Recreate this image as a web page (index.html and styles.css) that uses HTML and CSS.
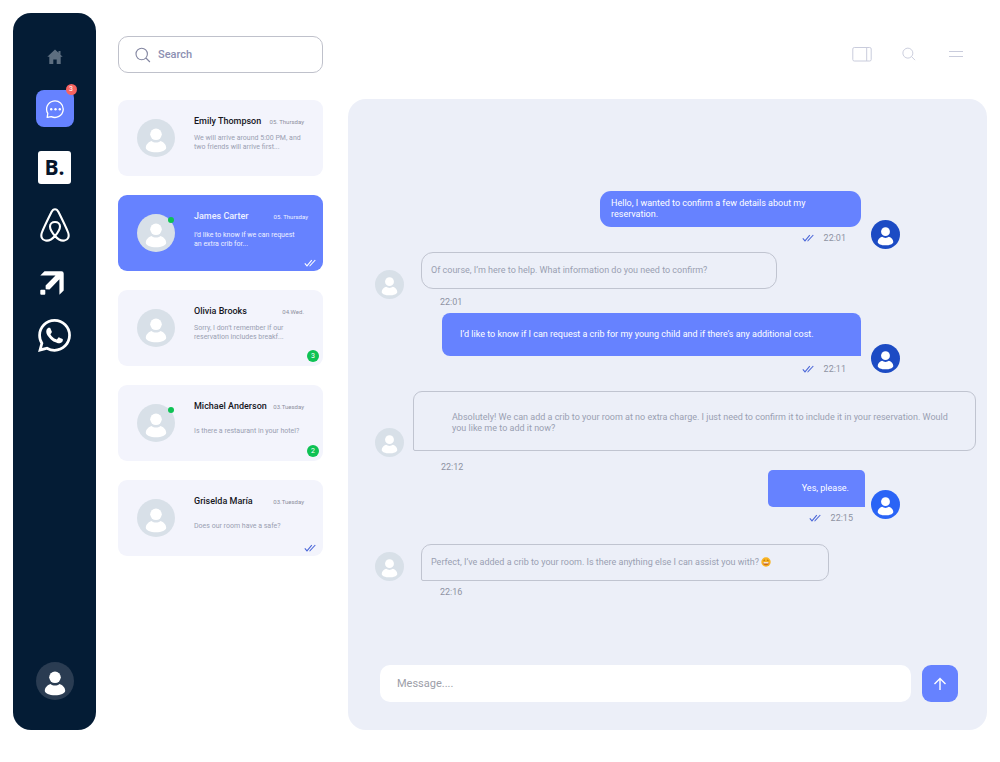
FILE: index.html
```html
<!DOCTYPE html>
<html lang="en">
<head>
  <meta charset="UTF-8" />
  <meta name="viewport" content="width=device-width, initial-scale=1.0"/>
  <title>Messages</title>
  <link rel="stylesheet" href="styles.css">
</head>
<body>

  <!-- Shared icons -->
  <svg class="sprite" aria-hidden="true">
    <symbol id="person" viewBox="0 0 38 38">
      <circle cx="19" cy="15.3" r="5.800"/>
      <path d="M14.500 22c2.600 2 6.400 2 9 0 3.200 1 5.700 3.900 5.700 6.700 0 2.500-4.600 4.500-10.200 4.500s-10.200-2-10.200-4.500c0-2.800 2.500-5.700 5.700-6.700z"/>
    </symbol>
    <symbol id="ticks" viewBox="0 0 12 8">
      <path d="M.8 4.300l2.200 2.500L7.800 1.200M5.600 6.500l.3.300L11.300 1" fill="none" stroke="currentColor" stroke-width="1.100"/>
    </symbol>
    <symbol id="glass" viewBox="0 0 16 16">
      <path d="M12.400 7a5.700 5.700 0 1 1-11.400 0 5.700 5.700 0 0 1 11.400 0zM10.900 11l4 4" fill="none" stroke="currentColor" stroke-width="1.100"/>
    </symbol>
  </svg>

  <!-- Sidebar -->
  <nav class="sidebar">
    <a href="#" class="home" aria-label="Home">
      <svg width="18" height="18" viewBox="0 0 18 18"><path d="M9 1.500L1.300 8.700h2V16h4v-4.500h3.400V16h4V8.700h2l-2.200-2V3h-2v1.800z" fill="#5d6e80"/></svg>
    </a>
    <a href="#" class="chats" aria-label="Messages">
      <svg width="20" height="20" viewBox="0 0 20 20">
        <path d="M2.200 18.400l.6-4A8.300 8.300 0 1 1 6.300 17.600z" fill="none" stroke="#fff" stroke-width="1.300" stroke-linejoin="round"/>
        <circle cx="6.200" cy="10.200" r="1.200" fill="#fff"/><circle cx="10.500" cy="10.200" r="1.200" fill="#fff"/><circle cx="14.800" cy="10.200" r="1.200" fill="#fff"/>
      </svg>
      <span class="alert">3</span>
    </a>
    <a href="#" class="booking" aria-label="Booking">B.</a>
    <a href="#" aria-label="Airbnb">
      <svg width="30" height="34" viewBox="0 0 30 34"><path d="M15 28C11.500 32 8 33 5.500 32.500 2 32 .4 28.500 1.900 24.500 4 19 9 9 11.500 4c1-2 2-2.800 3.500-2.800s2.500.8 3.500 2.800c2.500 5 7.500 15 9.600 20.500 1.500 4-.1 7.500-3.600 8-2.500.5-6-.5-9.500-4.500-3-3.500-5-7-5-9.500 0-2.800 2.200-4.500 5-4.500s5 1.700 5 4.500c0 2.500-2 6-5 9.500z" fill="none" stroke="#fff" stroke-width="2.100"/></svg>
    </a>
    <a href="#" aria-label="Expedia">
      <svg width="29" height="29" viewBox="0 -5 29 29"><path d="M4.500.3H21.500Q23.700.3 23.700 2.500V19.500L19.400 23.800V8.300L9.500 18.400 5.700 18.200 5.600 14.500 15.500 4.600H.3zM1.200 18.700h3.200q.9 0 .9.900v3.200q0 .9-.9.900H1.200q-.9 0-.9-.9v-3.200q0-.9.900-.9z" fill="#fff"/></svg>
    </a>
    <a href="#" aria-label="WhatsApp">
      <svg width="33" height="33" viewBox="0 0 24 24"><path fill="#fff" d="M17.472 14.382c-.297-.149-1.758-.867-2.030-.967-.273-.099-.471-.148-.67.15-.197.297-.767.966-.94 1.164-.173.199-.347.223-.644.075-.297-.15-1.255-.463-2.390-1.475-.883-.788-1.480-1.761-1.653-2.059-.173-.297-.018-.458.13-.606.134-.133.298-.347.446-.52.149-.174.198-.298.298-.497.099-.198.05-.371-.025-.52-.075-.149-.669-1.612-.916-2.207-.242-.579-.487-.5-.669-.51-.173-.008-.371-.01-.57-.01-.198 0-.52.074-.792.372-.272.297-1.040 1.016-1.040 2.479 0 1.462 1.065 2.875 1.213 3.074.149.198 2.096 3.200 5.077 4.487.709.306 1.262.489 1.694.625.712.227 1.360.195 1.871.118.571-.085 1.758-.719 2.006-1.413.248-.694.248-1.289.173-1.413-.074-.124-.272-.198-.57-.347m-5.421 7.403h-.004a9.870 9.870 0 01-5.031-1.378l-.361-.214-3.741.982.998-3.648-.235-.374a9.860 9.860 0 01-1.510-5.260c.001-5.450 4.436-9.884 9.888-9.884 2.640 0 5.122 1.030 6.988 2.898a9.825 9.825 0 012.893 6.994c-.003 5.450-4.437 9.884-9.885 9.884m8.413-18.297A11.815 11.815 0 0012.050 0C5.495 0 .16 5.335.157 11.892c0 2.096.547 4.142 1.588 5.945L.057 24l6.305-1.654a11.882 11.882 0 005.683 1.448h.005c6.554 0 11.890-5.335 11.893-11.893a11.821 11.821 0 00-3.480-8.413Z"/></svg>
    </a>
    <a href="#" class="avatar me" aria-label="My profile"><svg><use href="#person"/></svg></a>
  </nav>

  <!-- Conversation list -->
  <aside class="inbox">
    <label class="search">
      <svg><use href="#glass"/></svg>
      <input type="search" placeholder="Search" aria-label="Search" />
    </label>

    <a href="#" class="card">
      <span class="avatar"><svg><use href="#person"/></svg></span>
      <div class="info">
        <div class="top"><h2>Emily Thompson</h2><time>05. Thursday</time></div>
        <p>We will arrive around 5:00 PM, and<br>two friends will arrive first...</p>
      </div>
    </a>

    <a href="#" class="card active">
      <span class="avatar"><svg><use href="#person"/></svg><i class="online"></i></span>
      <div class="info">
        <div class="top"><h2>James Carter</h2><time>05. Thursday</time></div>
        <p>I’d like to know if we can request<br>an extra crib for...</p>
      </div>
      <svg class="ticks"><use href="#ticks"/></svg>
    </a>

    <a href="#" class="card">
      <span class="avatar"><svg><use href="#person"/></svg></span>
      <div class="info">
        <div class="top"><h2>Olivia Brooks</h2><time>04.Wed.</time></div>
        <p>Sorry, I don’t remember if our<br>reservation includes breakf...</p>
      </div>
      <span class="unread">3</span>
    </a>

    <a href="#" class="card">
      <span class="avatar"><svg><use href="#person"/></svg><i class="online"></i></span>
      <div class="info">
        <div class="top"><h2>Michael Anderson</h2><time>03.Tuesday</time></div>
        <p class="single">Is there a restaurant in your hotel?</p>
      </div>
      <span class="unread">2</span>
    </a>

    <a href="#" class="card">
      <span class="avatar"><svg><use href="#person"/></svg></span>
      <div class="info">
        <div class="top"><h2>Griselda María</h2><time>03.Tuesday</time></div>
        <p class="single">Does our room have a safe?</p>
      </div>
      <svg class="ticks"><use href="#ticks"/></svg>
    </a>
  </aside>

  <!-- Chat -->
  <main>
    <header>
      <button aria-label="Toggle panel">
        <svg width="20" height="20" viewBox="0 0 20 20" fill="none" stroke="currentColor"><rect x=".8" y="3.500" width="18.400" height="13.500" rx="1.500"/><path d="M14.700 3.500V17"/></svg>
      </button>
      <button aria-label="Search chat"><svg width="14" height="14"><use href="#glass"/></svg></button>
      <button aria-label="Menu">
        <svg width="20" height="20" viewBox="0 0 20 20" fill="none" stroke="currentColor"><path d="M3 7.500h14M3 12.500h14"/></svg>
      </button>
    </header>

    <section class="chat">
      <article class="message sent first">
        <div class="content">
          <p class="bubble">Hello, I wanted to confirm a few details about my reservation.</p>
          <div class="meta"><svg class="ticks"><use href="#ticks"/></svg><time>22:01</time></div>
        </div>
        <span class="avatar"><svg><use href="#person"/></svg></span>
      </article>

      <article class="message help">
        <span class="avatar"><svg><use href="#person"/></svg></span>
        <div class="content">
          <p class="bubble">Of course, I’m here to help. What information do you need to confirm?</p>
          <div class="meta"><time>22:01</time></div>
        </div>
      </article>

      <article class="message sent request">
        <div class="content">
          <p class="bubble">I’d like to know if I can request a crib for my young child and if there’s any additional cost.</p>
          <div class="meta"><svg class="ticks"><use href="#ticks"/></svg><time>22:11</time></div>
        </div>
        <span class="avatar"><svg><use href="#person"/></svg></span>
      </article>

      <article class="message answer">
        <span class="avatar"><svg><use href="#person"/></svg></span>
        <div class="content">
          <p class="bubble">Absolutely! We can add a crib to your room at no extra charge. I just need to confirm it to include it in your reservation. Would<br>you like me to add it now?</p>
          <div class="meta"><time>22:12</time></div>
        </div>
      </article>

      <article class="message sent yes">
        <div class="content">
          <p class="bubble">Yes, please.</p>
          <div class="meta"><svg class="ticks"><use href="#ticks"/></svg><time>22:15</time></div>
        </div>
        <span class="avatar"><svg><use href="#person"/></svg></span>
      </article>

      <article class="message done">
        <span class="avatar"><svg><use href="#person"/></svg></span>
        <div class="content">
          <p class="bubble">Perfect, I’ve added a crib to your room. Is there anything else I can assist you with?
            <svg class="smile" viewBox="0 0 10 10"><circle cx="5" cy="5" r="4.700" fill="#f9b320"/><path d="M2 5.200h6a3 3 0 0 1-6 0z" fill="#c96a1c"/><path d="M2.500 5.200h5v1.200h-5z" fill="#fff"/><path d="M2.500 3.700q.8-1 1.600 0M5.900 3.700q.8-1 1.600 0" fill="none" stroke="#7a4415" stroke-width=".7"/></svg></p>
          <div class="meta"><time>22:16</time></div>
        </div>
      </article>

      <form class="composer">
        <input type="text" placeholder="Message...." aria-label="Message" />
        <button type="button" aria-label="Send">
          <svg width="14" height="14" viewBox="0 0 14 14"><path d="M7 13V1.500M1.500 7L7 1.500 12.500 7" fill="none" stroke="#fff" stroke-width="1.400"/></svg>
        </button>
      </form>
    </section>
  </main>

</body>
</html>
```

FILE: styles.css
```css
:root {
  --navy: #041c35;
  --blue: #6682ff;
  --panel: #eceff8;
  --card: #f3f4fc;
  --gray: #9a9fb2;
  --green: #0ec254;
}

* {
  margin: 0;
  padding: 0;
  box-sizing: border-box;
  font-family: Roboto, 'Liberation Sans', sans-serif;
}

body {
  display: flex;
  min-height: 100vh;
  padding: 13px 13px 32px;
  background: white;
}

a {
  color: inherit;
  text-decoration: none;
}

button {
  border: none;
  background: none;
  cursor: pointer;
}

svg {
  display: block;
}

.sprite {
  position: absolute;
  width: 0;
  height: 0;
}

.avatar {
  position: relative;
  flex: none;
  width: 38px;
  height: 38px;
  border-radius: 50%;
  background: #d8e0e8;
}

.avatar svg {
  width: 100%;
  height: 100%;
  fill: white;
}

.ticks {
  width: 12px;
  height: 8px;
  color: #4a66d8;
}

/* Sidebar */
.sidebar {
  display: flex;
  flex-direction: column;
  align-items: center;
  gap: 24px;
  flex: none;
  width: 83px;
  padding: 35px 0 30px;
  border-radius: 18px;
  background: var(--navy);
}

.chats {
  position: relative;
  display: flex;
  align-items: center;
  justify-content: center;
  width: 38px;
  height: 37px;
  border-radius: 8px;
  background: var(--blue);
}

.alert {
  position: absolute;
  top: -6px;
  right: -3px;
  width: 11px;
  border-radius: 50%;
  background: #f9635f;
  color: white;
  font-size: 7px;
  line-height: 11px;
  text-align: center;
}

.booking {
  width: 33px;
  border-radius: 3px;
  background: white;
  color: #06152b;
  font-family: 'Open Sans', sans-serif;
  font-size: 21px;
  font-weight: bold;
  line-height: 33px;
  text-align: center;
}

.me {
  margin-top: auto;
  background: #2a3c52;
}

/* Conversation list */
.inbox {
  display: flex;
  flex-direction: column;
  gap: 19px;
  flex: none;
  width: 205px;
  margin: 23px 25px 0 22px;
}

.search {
  display: flex;
  align-items: center;
  gap: 7px;
  height: 37px;
  margin-bottom: 8px;
  padding: 0 16px;
  border: 1px solid #bfc1cb;
  border-radius: 10px;
}

.search svg {
  flex: none;
  width: 16px;
  height: 16px;
  color: #8285a0;
}

input {
  min-width: 0;
  flex: 1;
  border: none;
  outline: none;
  background: none;
  font-size: 11px;
}

.search input::placeholder {
  color: #8c8fb2;
  font-weight: 500;
}

.card {
  position: relative;
  display: flex;
  gap: 19px;
  min-height: 76px;
  padding: 0 13px 0 19px;
  border-radius: 9px;
  background: var(--card);
}

.card .avatar {
  align-self: center;
}

.info {
  flex: 1;
  padding-top: 14px;
}

.top {
  display: flex;
  align-items: center;
  justify-content: space-between;
  padding-right: 6px;
}

.top h2 {
  color: #15161c;
  font-size: 9px;
  font-weight: 500;
  line-height: 14px;
}

.top time {
  color: #8d8f9c;
  font-size: 6px;
}

.info p {
  margin-top: 6px;
  color: var(--gray);
  font-size: 7px;
  line-height: 9px;
  white-space: nowrap;
}

.info .single {
  margin-top: 14px;
}

.card.active {
  background: var(--blue);
}

.active h2, .active time, .active p {
  color: #eef1ff;
}

.active .top {
  padding-right: 2px;
}

.active p {
  margin-top: 8px;
}

.online {
  position: absolute;
  top: 3px;
  right: 1px;
  width: 6px;
  height: 6px;
  border-radius: 50%;
  background: var(--green);
}

.card .ticks {
  position: absolute;
  right: 7px;
  bottom: 4px;
}

.active .ticks {
  color: white;
}

.unread {
  position: absolute;
  right: 4px;
  bottom: 4px;
  width: 12px;
  border-radius: 50%;
  background: var(--green);
  color: white;
  font-size: 7px;
  line-height: 12px;
  text-align: center;
}

/* Chat */
main {
  display: flex;
  flex-direction: column;
  flex: 1;
  min-width: 0;
}

header {
  display: flex;
  align-items: center;
  justify-content: flex-end;
  gap: 27px;
  height: 82px;
  margin-bottom: 4px;
  padding-right: 21px;
}

header button {
  display: flex;
  align-items: center;
  justify-content: center;
  width: 20px;
  height: 20px;
  color: #c9ccdc;
}

.chat {
  display: flex;
  flex-direction: column;
  flex: 1;
  padding: 92px 29px 28px 27px;
  border-radius: 18px;
  background: var(--panel);
}

.message {
  display: flex;
  align-items: flex-end;
  gap: 17px;
}

.message .avatar {
  width: 29px;
  height: 29px;
}

.bubble {
  padding: 12px 9px;
  border: 1px solid #c0c4d0;
  border-radius: 12px;
  color: var(--gray);
  font-size: 9px;
  line-height: 11px;
}

.meta {
  display: flex;
  align-items: center;
  gap: 10px;
  padding-left: 19px;
  color: #8f93a3;
  font-size: 9px;
  line-height: 22px;
}

.sent {
  justify-content: flex-end;
  gap: 10px;
  padding-right: 58px;
}

.sent .avatar {
  background: #1c4bc4;
}

.sent .bubble {
  border: none;
  background: var(--blue);
  color: white;
}

.sent .meta {
  justify-content: flex-end;
  padding: 0 15px 0 0;
}

.first .bubble {
  width: 261px;
  padding: 7px 11px;
  border-radius: 11px;
}

.help {
  margin-top: 3px;
}

.help .bubble {
  width: 356px;
}

.help .avatar {
  margin-bottom: 14px;
}

.help .meta, .request .meta {
  padding-top: 2px;
}

.request .bubble {
  width: 419px;
  padding: 16px 18px;
  border-radius: 8px 8px 0 8px;
}

.request .avatar {
  margin-bottom: 7px;
}

.answer {
  gap: 9px;
  margin: 11px -18px 0 0;
}

.answer .content {
  flex: 1;
}

.answer .bubble {
  padding: 20px 0 16px 38px;
  border-radius: 9px 9px 9px 2px;
  white-space: nowrap;
}

.answer .meta {
  padding: 5px 0 0 28px;
}

.answer .avatar {
  margin-bottom: 21px;
}

/* sits beside the time of the previous message */
.yes {
  gap: 6px;
  margin-top: -8px;
}

.yes .bubble {
  padding: 13px 16px 13px 34px;
  border-radius: 5px 5px 0 5px;
}

.yes .avatar {
  margin-bottom: 10px;
  background: #2a64f6;
}

.yes .meta {
  padding-right: 12px;
}

.done {
  margin-top: 15px;
}

.done .bubble {
  width: 408px;
  border-radius: 10px 10px 10px 2px;
}

.done .avatar {
  margin-bottom: 22px;
}

.smile {
  display: inline;
  width: 10px;
  height: 10px;
  vertical-align: -2px;
}

.composer {
  display: flex;
  gap: 11px;
  margin: auto 0 0 5px;
}

.composer input {
  height: 37px;
  padding: 0 17px;
  border-radius: 10px;
  background: white;
}

.composer input::placeholder {
  color: #9c9ea8;
}

.composer button {
  display: flex;
  align-items: center;
  justify-content: center;
  width: 36px;
  border-radius: 9px;
  background: var(--blue);
}
```
